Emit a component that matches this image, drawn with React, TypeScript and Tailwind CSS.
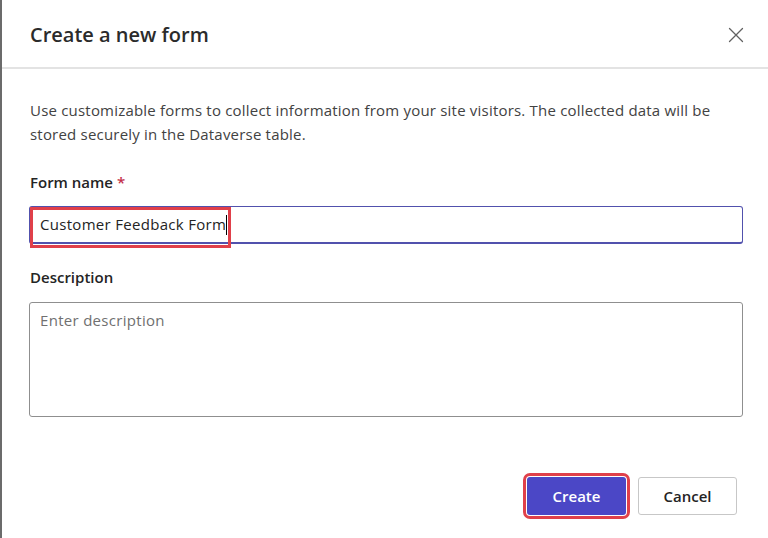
import React from "react";

const font = { fontFamily: '"Open Sans", "Noto Sans", Arial, sans-serif' };

function CloseIcon() {
  return (
    <svg width="16" height="16" viewBox="0 0 16 16" fill="none" stroke="#616161" strokeWidth="1.3" strokeLinecap="round">
      <path d="M1.5 1.5l13 13M14.5 1.5l-13 13" />
    </svg>
  );
}

export default function App() {
  return (
    <div className="w-[768px] h-[538px] bg-white border-l-2 border-[#6b6b6b] flex flex-col text-[#424242]" style={font}>
      <header className="h-[69px] shrink-0 flex items-center justify-between pl-[28px] pr-[24px] border-b-2 border-[#e3e3e3]">
        <h1 className="text-[20px] font-semibold text-[#2b2b2b] pt-[2px]">Create a new form</h1>
        <button className="p-0 text-[#616161] pt-[2px]" aria-label="Close">
          <CloseIcon />
        </button>
      </header>

      <div className="flex flex-col pl-[27px] pr-[25px] pt-[29px] flex-1">
        <p className="text-[15px] leading-[24px] pl-[1px] tracking-[0.2px]">
          Use customizable forms to collect information from your site visitors. The collected data will be stored securely in the Dataverse table.
        </p>

        <label className="mt-[24px] text-[15px] leading-[24px] font-semibold text-[#242424] pl-[1px]">
          Form name <span className="text-[#c4314b]">*</span>
        </label>
        <div className="relative mt-[12px]">
          <div className="h-[38px] border border-[#5151ad] border-b-2 rounded-[3px] flex items-center pl-[10px] text-[15px] text-[#242424] tracking-[0.3px]">
            Customer Feedback Form
            <span className="w-[1px] h-[20px] bg-black" />
          </div>
          <div className="absolute left-[1px] top-[1px] w-[201px] h-[41px] border-[3px] border-[#e0404a] pointer-events-none" />
        </div>

        <label className="mt-[21px] text-[15px] leading-[24px] font-semibold text-[#242424] pl-[1px]">Description</label>
        <textarea
          className="mt-[13px] h-[115px] resize-none border border-[#8f8f8f] rounded-[3px] px-[10px] py-[6px] text-[15px] outline-none placeholder:text-[#707070] tracking-[0.3px]"
          placeholder="Enter description"
        />

        <div className="flex justify-end gap-[12px] mt-[60px] pr-[6px]">
          <button className="w-[99px] h-[38px] rounded-[3px] bg-[#4b47c6] text-white text-[15px] font-semibold outline-[3px] outline-solid outline-[#e0404a] outline-offset-[1px]">
            Create
          </button>
          <button className="w-[99px] h-[38px] rounded-[3px] border border-[#c7c7c7] bg-white text-[#242424] text-[15px] font-semibold">
            Cancel
          </button>
        </div>
      </div>
    </div>
  );
}
